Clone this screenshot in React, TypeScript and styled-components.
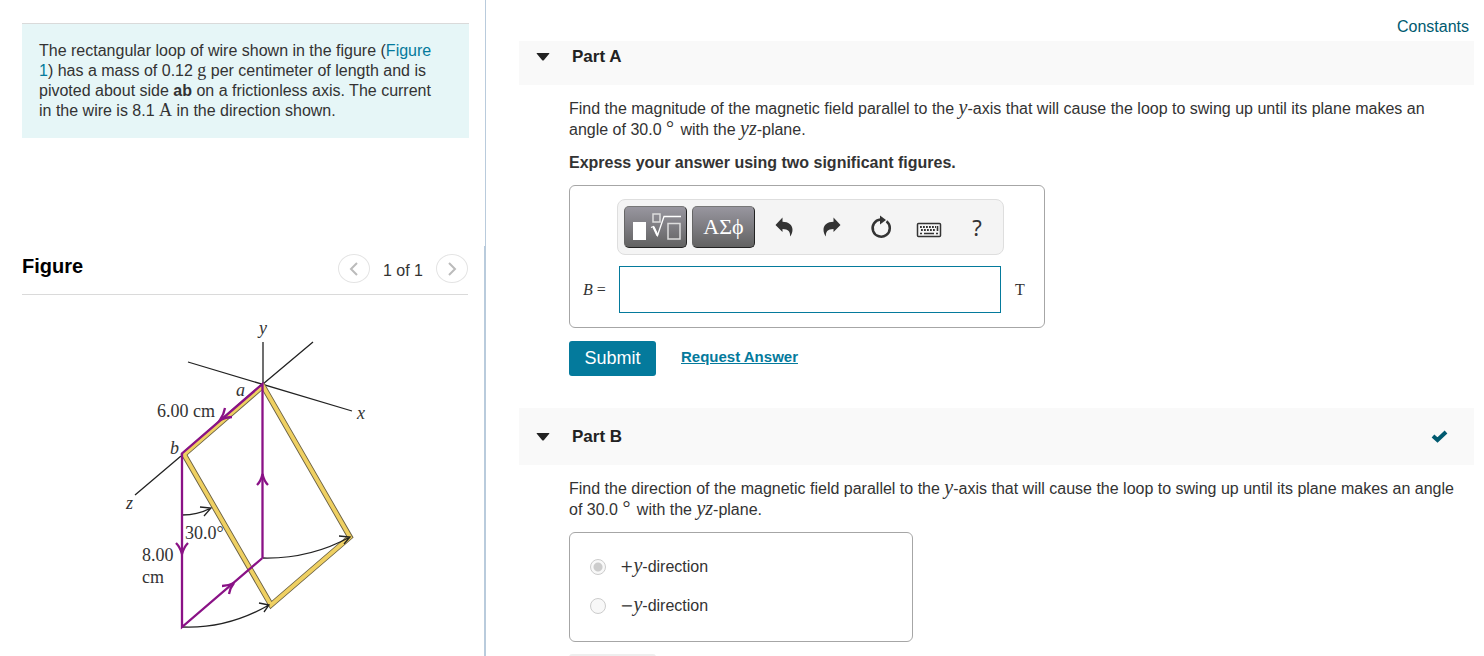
import React from "react";
import styled, { createGlobalStyle } from "styled-components";

const GlobalStyle = createGlobalStyle`
  *, *::before, *::after { box-sizing: border-box; }
  body {
    margin: 0;
    background: #fff;
    color: #333;
    font-family: "Liberation Sans", Arial, sans-serif;
    font-size: 16px;
  }
`;

const serif = `"Liberation Serif", "Times New Roman", serif`;
const teal = "#047a9c";
const darkTeal = "#005a70";

const Page = styled.div`
  display: grid;
  grid-template-columns: minmax(0, 486fr) minmax(0, 998fr);
  height: 100vh;
  overflow: hidden;
`;

const Side = styled.aside`
  display: flex;
  flex-direction: column;
  min-height: 0;
  border-right: 1px solid #b9cbdc;
`;

const Intro = styled.section`
  flex: none;
  height: 246px;
  padding: 23px 16px 0 22px;
`;

const Problem = styled.p`
  margin: 0;
  padding: 17px 24px 17px 17px;
  border-top: 1px solid #dadada;
  background: #e6f6f7;
  line-height: 20px;
`;

const TextLink = styled.a<{ $dark?: boolean }>`
  color: ${(p) => (p.$dark ? darkTeal : teal)};
  text-decoration: none;
`;

const FigurePane = styled.section`
  flex: 1;
  min-height: 0;
  padding: 7px 16px 0 22px;
  border-right: 1px solid #b9cbdc;
  overflow: hidden;
`;

const FigureHead = styled.header`
  display: flex;
  align-items: center;
  height: 42px;
  border-bottom: 1px solid #dadada;
`;

const FigureTitle = styled.h2`
  flex: 1;
  margin: 0;
  padding-bottom: 16px;
  color: #000;
  font-size: 20px;
  line-height: 22px;
`;

const Pager = styled.nav`
  display: flex;
  align-items: center;
  gap: 13px;
  padding-bottom: 10px;
`;

const PageCount = styled.span`
  padding-top: 5px;
  line-height: 20px;
`;

const RoundButton = styled.button`
  display: grid;
  place-items: center;
  width: 32px;
  height: 29px;
  padding: 0;
  border: 1px solid #e4e4e4;
  border-radius: 50%;
  background: #fff;
`;

const Drawing = styled.svg`
  display: block;
  width: 300px;
  margin: 15px 0 0 78px;
  font-family: ${serif};
  font-size: 18px;
`;

const Main = styled.main`
  min-width: 0;
  padding: 0 10px 0 33px;
`;

const TopBar = styled.div`
  display: flex;
  justify-content: flex-end;
  height: 41px;
  padding: 17px 5px 0;
  line-height: 20px;
`;

const PartHead = styled.header<{ $tall?: boolean }>`
  display: flex;
  align-items: center;
  height: ${(p) => (p.$tall ? 57 : 44)}px;
  padding: 0 26px ${(p) => (p.$tall ? 0 : 12)}px 17px;
  background: #f9f9f9;
`;

const PartHeading = styled.h2`
  flex: 1;
  margin: 0;
  font-size: 17px;
`;

const Toggle = styled.button`
  display: flex;
  align-items: center;
  gap: 22px;
  padding: 0;
  border: 0;
  background: none;
  color: #222;
  font: bold 17px/20px "Liberation Sans", Arial, sans-serif;
`;

const PartBody = styled.div<{ $last?: boolean }>`
  padding: 13px 0 ${(p) => (p.$last ? 0 : 32)}px 50px;
`;

const Question = styled.p`
  margin: 0;
  padding-right: 8px;
  line-height: 21px;
`;

const Instruction = styled.p`
  margin: 12px 0;
  font-weight: bold;
  line-height: 21px;
`;

const MathVar = styled.i`
  font-family: ${serif};
  font-size: 20px;
  line-height: 0;
`;

const Unit = styled.span`
  font-family: ${serif};
  font-size: 18px;
  line-height: 0;
`;

const Degree = styled.span`
  margin-right: 2px;
  font-family: ${serif};
  font-size: 20px;
  line-height: 0;
`;

const Sign = styled.span`
  font-family: "DejaVu Serif", serif;
  line-height: 0;
`;

const AnswerBox = styled.div`
  width: 476px;
  max-width: 100%;
  height: 143px;
  padding: 13px 13px 0;
  border: 1px solid #a6a6a6;
  border-radius: 6px;
`;

const Toolbar = styled.div`
  display: flex;
  align-items: center;
  height: 56px;
  margin: 0 27px 11px 34px;
  padding: 0 2px 0 6px;
  border: 1px solid #dedede;
  border-radius: 8px;
  background: #f4f4f4;
`;

const DarkKey = styled.button`
  flex: none;
  display: flex;
  align-items: center;
  justify-content: center;
  width: 63px;
  height: 42px;
  margin-right: 5px;
  padding: 0;
  border: 1px solid #222;
  border-top-color: #777;
  border-left-color: #666;
  border-radius: 5px;
  background: linear-gradient(#98969f, #626262);
  color: #fff;
  font: 22px/38px ${serif};
`;

const ToolButton = styled.button`
  flex: 1;
  display: grid;
  place-items: center;
  height: 42px;
  padding: 0;
  border: 0;
  background: none;
  color: #333;
  font: 22px/40px "Noto Sans", sans-serif;
`;

const AnswerRow = styled.div`
  display: flex;
  align-items: center;
  font-family: ${serif};
`;

const AnswerLabel = styled.label`
  flex: none;
  width: 36px;
`;

const AnswerInput = styled.input`
  flex: 1;
  min-width: 0;
  height: 47px;
  margin-right: 14px;
  padding: 0 8px;
  border: 1px solid ${teal};
  background: #fff;
  font-size: 18px;
`;

const AnswerUnit = styled.span`
  width: 16px;
`;

const Actions = styled.div`
  display: flex;
  align-items: center;
  gap: 25px;
  margin-top: 13px;
`;

const Submit = styled.button`
  display: block;
  width: 87px;
  height: 35px;
  padding: 0 0 2px;
  border: 0;
  border-radius: 3px;
  background: ${teal};
  color: #fff;
  font: 18px/32px "Liberation Sans", Arial, sans-serif;

  &:disabled { background: #eee; }
`;

const RequestLink = styled.a`
  padding-bottom: 4px;
  color: ${teal};
  font-size: 15px;
  font-weight: bold;
`;

const Choices = styled.fieldset`
  display: flex;
  flex-direction: column;
  gap: 19px;
  width: 344px;
  max-width: 100%;
  height: 110px;
  margin: 12px 0;
  padding: 24px 20px 0;
  border: 1px solid #a6a6a6;
  border-radius: 6px;
`;

const Choice = styled.label`
  display: flex;
  align-items: center;
  gap: 14px;
  height: 20px;
  line-height: 20px;
`;

const Radio = styled.input`
  appearance: none;
  width: 16px;
  height: 16px;
  margin: 0;
  border: 1px solid #ccc;
  border-radius: 50%;
  background: #f8f8f8;

  &:checked {
    background: radial-gradient(circle, #ccc 0 4px, #f8f8f8 5px);
  }
`;

const purple = { stroke: "#8a1286", strokeWidth: 2, fill: "none" };
const black = { stroke: "#222", strokeWidth: 1.3, fill: "none" };

function LoopDiagram() {
  return (
    <Drawing viewBox="0 0 300 340" role="img" aria-label="Rectangular wire loop pivoted about side ab">
      <g {...black}>
        <path d="M163 32V74M88 52L252 101M213 32L163 74M81 146L35 185" />
      </g>
      <g fill="none" strokeLinejoin="miter">
        <path d="M163 76L84 144.500L171 295L250 227Z" stroke="#6b6144" strokeWidth="5.600" />
        <path d="M163 76L84 144.500L171 295L250 227Z" stroke="#efd062" strokeWidth="3.800" />
      </g>
      <g {...black}>
        <path d="M82 205Q98 205 111 198M100 197L111 198L104 206" />
        <path d="M163 248Q210 249 250 227M239 226L250 227L244 234" />
        <path d="M82 317Q127 319 169 295M159 293L169 295L164 302" />
      </g>
      <g {...purple} strokeWidth={2.300}>
        <path d="M162.500 248V74L82 143.500V317L162.500 248" />
        <path d="M157 175Q161 171 162.500 164Q164 171 168 175" />
        <path d="M76 233Q80 237 82 244Q84 237 88 233" />
        <path d="M122 276Q128 276 134 273Q130 278 129 284" />
        <path d="M125 98Q124 104 120 110Q126 107 132 107" />
      </g>
      <g fill="#333">
        <text x="159" y="24" fontStyle="italic">y</text>
        <text x="257" y="109" fontStyle="italic">x</text>
        <text x="26" y="199" fontStyle="italic">z</text>
        <text x="136" y="86" fontStyle="italic">a</text>
        <text x="70" y="144" fontStyle="italic">b</text>
        <text x="57" y="107">6.00 cm</text>
        <text x="85" y="229">30.0°</text>
        <text x="42" y="251">8.00</text>
        <text x="42" y="273">cm</text>
      </g>
    </Drawing>
  );
}

function Chevron({ next }: { next?: boolean }) {
  return (
    <svg width="10" height="14" viewBox="0 0 10 14" fill="none" stroke="#bbb" strokeWidth="2" aria-hidden="true">
      <path d={next ? "M2 1l6 6-6 6" : "M8 1L2 7l6 6"} />
    </svg>
  );
}

function PartTitle({ children }: { children: React.ReactNode }) {
  return (
    <PartHeading>
      <Toggle type="button" aria-expanded="true">
        <svg width="14" height="8" viewBox="0 0 14 8" aria-hidden="true">
          <path d="M1 0h12q1 0 0 1L8 7q-1 1-2 0L1 1q-1-1 0-1z" fill="#222" />
        </svg>
        {children}
      </Toggle>
    </PartHeading>
  );
}

function TemplateIcon() {
  return (
    <svg width="51" height="32" viewBox="0 0 51 32" fill="none" aria-hidden="true">
      <path d="M3 11h13v18H3z" fill="#fff" />
      <path d="M23 3h7v8h-7zM38 12.500h12v15.500H38z" stroke="#ddd" strokeWidth="1.500" />
      <path d="M21 16.500l2.500-1 4 9L34 5.500h17" stroke="#fff" strokeWidth="1.300" />
      <path d="M23.500 16l4 8.500" stroke="#fff" strokeWidth="2.200" />
    </svg>
  );
}

function ArrowIcon({ flip }: { flip?: boolean }) {
  return (
    <svg width="18" height="20" viewBox="0 0 18 20" fill="#333" aria-hidden="true">
      <path
        transform={flip ? "matrix(-1 0 0 1 18 0)" : undefined}
        d="M0.500 8L7.500 0.500v4.200c6 0 10 3 10 8 0 2.500-.8 4.800-2.500 6.800 .6-4.500-1.500-7.500-7.500-7.500V15z"
      />
    </svg>
  );
}

function ResetIcon() {
  return (
    <svg width="22" height="24" viewBox="0 0 22 24" aria-hidden="true">
      <path d="M16.500 6.300A8.600 8.600 0 1 1 10.500 4.500" fill="none" stroke="#333" strokeWidth="2.500" />
      <path d="M10 0.500l6 4.500-6 4.500z" fill="#333" />
    </svg>
  );
}

function KeyboardIcon() {
  return (
    <svg width="26" height="28" viewBox="0 0 26 28" fill="none" stroke="#333" aria-hidden="true">
      <rect x="1.500" y="10.500" width="23" height="13" rx="1" strokeWidth="1.500" />
      <path d="M4 14h16M5 17h15" strokeWidth="1.800" strokeDasharray="1.800 1.200" />
      <path d="M4 20.500h2M8 20.500h10M20 20.500h2M21.500 13v5" strokeWidth="1.600" />
    </svg>
  );
}

export default function App() {
  return (
    <>
      <GlobalStyle />
      <Page>
        <Side>
          <Intro>
            <Problem>
              The rectangular loop of wire shown in the figure (<TextLink href="#figure">Figure 1</TextLink>) has a
              mass of 0.12 <Unit>g</Unit> per centimeter of length and is pivoted about side <b>ab</b> on a
              frictionless axis. The current in the wire is 8.1 <Unit>A</Unit> in the direction shown.
            </Problem>
          </Intro>
          <FigurePane id="figure">
            <FigureHead>
              <FigureTitle>Figure</FigureTitle>
              <Pager aria-label="Figures">
                <RoundButton type="button" aria-label="Previous figure"><Chevron /></RoundButton>
                <PageCount>1 of 1</PageCount>
                <RoundButton type="button" aria-label="Next figure"><Chevron next /></RoundButton>
              </Pager>
            </FigureHead>
            <LoopDiagram />
          </FigurePane>
        </Side>

        <Main>
          <TopBar><TextLink $dark href="#constants">Constants</TextLink></TopBar>

          <section>
            <PartHead><PartTitle>Part A</PartTitle></PartHead>
            <PartBody>
              <Question>
                Find the magnitude of the magnetic field parallel to the <MathVar>y</MathVar>-axis that will cause the
                loop to swing up until its plane makes an angle of 30.0 <Degree>°</Degree> with
                the <MathVar>yz</MathVar>-plane.
              </Question>
              <Instruction>Express your answer using two significant figures.</Instruction>
              <AnswerBox>
                <Toolbar role="toolbar" aria-label="Equation tools">
                  <DarkKey type="button" aria-label="Templates"><TemplateIcon /></DarkKey>
                  <DarkKey type="button">ΑΣϕ</DarkKey>
                  <ToolButton type="button" aria-label="Undo"><ArrowIcon /></ToolButton>
                  <ToolButton type="button" aria-label="Redo"><ArrowIcon flip /></ToolButton>
                  <ToolButton type="button" aria-label="Reset"><ResetIcon /></ToolButton>
                  <ToolButton type="button" aria-label="Keyboard shortcuts"><KeyboardIcon /></ToolButton>
                  <ToolButton type="button">?</ToolButton>
                </Toolbar>
                <AnswerRow>
                  <AnswerLabel htmlFor="answer"><i>B</i> =</AnswerLabel>
                  <AnswerInput id="answer" type="text" />
                  <AnswerUnit>T</AnswerUnit>
                </AnswerRow>
              </AnswerBox>
              <Actions>
                <Submit type="button">Submit</Submit>
                <RequestLink href="#request">Request Answer</RequestLink>
              </Actions>
            </PartBody>
          </section>

          <section>
            <PartHead $tall>
              <PartTitle>Part B</PartTitle>
              <svg width="18" height="16" viewBox="0 0 18 16" role="img" aria-label="Correct">
                <path d="M3 7L7.500 11 16 3" fill="none" stroke={darkTeal} strokeWidth="4" />
              </svg>
            </PartHead>
            <PartBody $last>
              <Question>
                Find the direction of the magnetic field parallel to the <MathVar>y</MathVar>-axis that will cause the
                loop to swing up until its plane makes an angle of 30.0 <Degree>°</Degree> with
                the <MathVar>yz</MathVar>-plane.
              </Question>
              <Choices disabled aria-label="Direction">
                <Choice>
                  <Radio type="radio" name="direction" defaultChecked />
                  <span><Sign>+</Sign><MathVar>y</MathVar>-direction</span>
                </Choice>
                <Choice>
                  <Radio type="radio" name="direction" />
                  <span><Sign>−</Sign><MathVar>y</MathVar>-direction</span>
                </Choice>
              </Choices>
              <Submit type="button" disabled aria-label="Submit part B" />
            </PartBody>
          </section>
        </Main>
      </Page>
    </>
  );
}
